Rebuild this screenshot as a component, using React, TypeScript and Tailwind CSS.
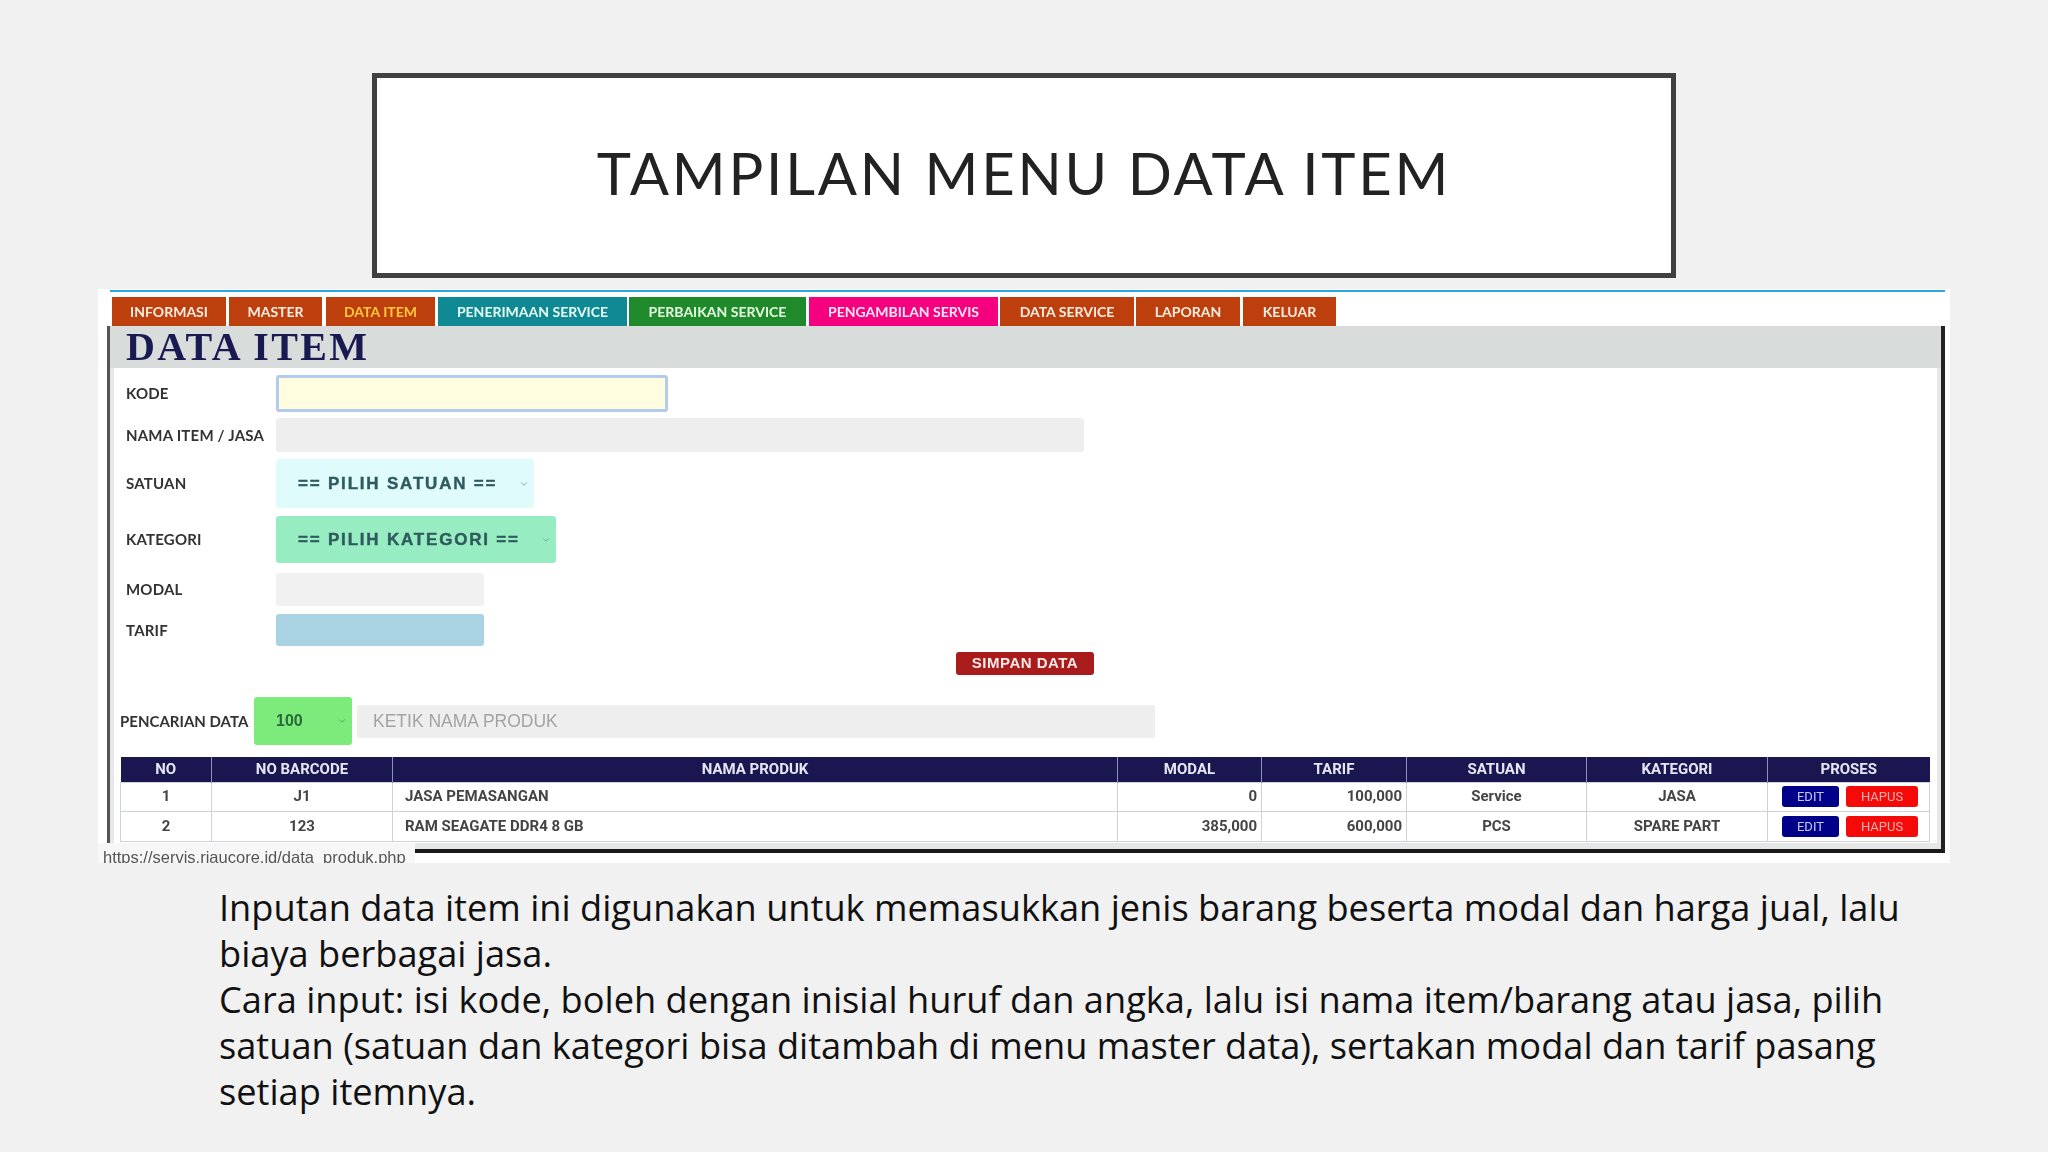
import { ChevronDown } from "lucide-react";

const tabs = [
  { label: "INFORMASI", cls: "w-[114px] bg-[#bd3f0e] text-[#fdeee0] mr-[3px]" },
  { label: "MASTER", cls: "w-[93px] bg-[#bd3f0e] text-[#fdeee0] mr-[4px]" },
  { label: "DATA ITEM", cls: "w-[109px] bg-[#bd3f0e] text-[#ffc93c] mr-[3px]" },
  { label: "PENERIMAAN SERVICE", cls: "w-[189px] bg-[#0f8a94] text-[#e8fbf5] mr-[2px]" },
  { label: "PERBAIKAN SERVICE", cls: "w-[177px] bg-[#1f8a2c] text-[#e8fbe0] mr-[3px]" },
  { label: "PENGAMBILAN SERVIS", cls: "w-[189px] bg-[#f5007f] text-[#ffe8f4] mr-[2px]" },
  { label: "DATA SERVICE", cls: "w-[134px] bg-[#bd3f0e] text-[#fdeee0] mr-[2px]" },
  { label: "LAPORAN", cls: "w-[104px] bg-[#bd3f0e] text-[#fdeee0] mr-[3px]" },
  { label: "KELUAR", cls: "w-[93px] bg-[#bd3f0e] text-[#fdeee0]" },
];

const FormLabel = ({ text }: { text: string }) => (
  <label className="w-[162px] shrink-0 pl-[12px] font-['Lato'] text-[15px] font-bold leading-none tracking-[0.2px] text-[#333]">{text}</label>
);

const Pick = ({ text, cls }: { text: string; cls: string }) => (
  <div className={`flex items-center justify-between rounded-[3px] pl-[22px] pr-[5px] ${cls}`}>
    <span className="font-['Liberation_Sans'] text-[17px] font-bold tracking-[1.8px] text-[#2f5a5e] [-webkit-text-stroke:0.4px_#2f5a5e]">{text}</span>
    <ChevronDown size={10} strokeWidth={2} className="text-[#6f9a9a]" />
  </div>
);

const rows = [
  { no: "1", code: "J1", name: "JASA PEMASANGAN", modal: "0", tarif: "100,000", unit: "Service", cat: "JASA" },
  { no: "2", code: "123", name: "RAM SEAGATE DDR4 8 GB", modal: "385,000", tarif: "600,000", unit: "PCS", cat: "SPARE PART" },
];

const heads = ["NO", "NO BARCODE", "NAMA PRODUK", "MODAL", "TARIF", "SATUAN", "KATEGORI", "PROSES"];

export default function App() {
  return (
    <div className="h-[1152px] w-[2048px] overflow-hidden bg-[#f1f1f1]">
      <div className="ml-[372px] mt-[73px] flex h-[205px] w-[1304px] items-center justify-center border-[5px] border-[#404040] bg-white pb-[6px]">
        <h1 className="font-['Lato'] text-[58px] font-normal leading-none tracking-[2.8px] text-[#222]">TAMPILAN MENU DATA ITEM</h1>
      </div>

      <div className="relative ml-[98px] mt-[11px] h-[574px] w-[1852px] bg-white blur-[0.6px]">
        <div className="ml-[12px] h-[2px] w-[1835px] translate-y-[1px] bg-[#2ba7e0]" />
        <nav className="ml-[14px] mt-[6px] flex h-[29px]">
          {tabs.map((t) => (
            <div key={t.label} className={`flex items-center justify-center font-['Lato'] text-[14px] font-bold ${t.cls}`}>
              {t.label}
            </div>
          ))}
        </nav>

        <div className="ml-[9px] h-[527px] w-[1838px] border-b-[4px] border-l-[3px] border-r-[4px] border-b-[#1a1a1a] border-l-[#555] border-r-[#222] bg-[#e6e8e8]">
          <div className="flex h-[42px] items-center bg-[#d8dcdb] pl-[16px]">
            <h2 className="font-['Liberation_Serif'] text-[40px] font-bold leading-none tracking-[2.4px] text-[#1a1a52]">DATA ITEM</h2>
          </div>

          <div className="ml-[4px] mr-[4px] h-[475px] bg-white pt-[7px]">
            <div className="flex items-center">
              <FormLabel text="KODE" />
              <input className="h-[37px] w-[392px] rounded-[3px] border-[3px] border-[#b3cbec] bg-[#fefde0] outline-none" />
            </div>
            <div className="mt-[6px] flex items-center">
              <FormLabel text="NAMA ITEM / JASA" />
              <input className="h-[34px] w-[808px] rounded-[3px] bg-[#eeeeee] outline-none" />
            </div>
            <div className="mt-[7px] flex items-center">
              <FormLabel text="SATUAN" />
              <Pick text="== PILIH SATUAN ==" cls="h-[49px] w-[258px] bg-[#e0fbfc]" />
            </div>
            <div className="mt-[8px] flex items-center">
              <FormLabel text="KATEGORI" />
              <Pick text="== PILIH KATEGORI ==" cls="h-[47px] w-[280px] bg-[#98ecc2]" />
            </div>
            <div className="mt-[10px] flex items-center">
              <FormLabel text="MODAL" />
              <input className="h-[33px] w-[208px] rounded-[3px] bg-[#f1f1f1] outline-none" />
            </div>
            <div className="mt-[8px] flex items-center">
              <FormLabel text="TARIF" />
              <input className="h-[32px] w-[208px] rounded-[3px] bg-[#a9d3e3] outline-none" />
            </div>
            <div className="mt-[6px] pl-[842px]">
              <button className="flex h-[23px] w-[138px] items-center justify-center rounded-[3px] bg-[#a81c1c] font-['Liberation_Sans'] text-[15px] font-bold tracking-[0.5px] text-[#fbeaea]">
                SIMPAN DATA
              </button>
            </div>

            <div className="mt-[22px] flex items-center pl-[6px]">
              <span className="w-[134px] shrink-0 font-['Lato'] text-[15px] font-bold text-[#333]">PENCARIAN DATA</span>
              <div className="flex h-[48px] w-[98px] items-center justify-between rounded-[3px] bg-[#7ceb7c] pl-[22px] pr-[5px]">
                <span className="font-['Liberation_Sans'] text-[16px] font-bold text-[#2a6a3a]">100</span>
                <ChevronDown size={10} strokeWidth={2} className="text-[#4f9a5f]" />
              </div>
              <input
                placeholder="KETIK NAMA PRODUK"
                className="ml-[5px] h-[33px] w-[798px] rounded-[3px] bg-[#eeeeee] pl-[16px] font-['Liberation_Sans'] text-[17.5px] outline-none placeholder:text-[#a3a3a3]"
              />
            </div>

            <table className="ml-[6px] mt-[12px] w-[1809px] table-fixed border-collapse font-['Roboto'] text-[15px] font-bold leading-none text-[#444]">
              <colgroup>
                <col className="w-[91px]" />
                <col className="w-[181px]" />
                <col className="w-[725px]" />
                <col className="w-[144px]" />
                <col className="w-[145px]" />
                <col className="w-[180px]" />
                <col className="w-[181px]" />
                <col className="w-[162px]" />
              </colgroup>
              <thead>
                <tr className="h-[25px] bg-[#1a1650] text-[#e6e6f5]">
                  {heads.map((h) => (
                    <th key={h} className="border-r border-[#8f8fc0] font-bold last:border-r-0">{h}</th>
                  ))}
                </tr>
              </thead>
              <tbody>
                {rows.map((r) => (
                  <tr key={r.no} className="h-[29.5px]">
                    <td className="border border-[#cfd2d6] text-center">{r.no}</td>
                    <td className="border border-[#cfd2d6] text-center">{r.code}</td>
                    <td className="border border-[#cfd2d6] pl-[12px]">{r.name}</td>
                    <td className="border border-[#cfd2d6] pr-[4px] text-right">{r.modal}</td>
                    <td className="border border-[#cfd2d6] pr-[4px] text-right">{r.tarif}</td>
                    <td className="border border-[#cfd2d6] text-center">{r.unit}</td>
                    <td className="border border-[#cfd2d6] text-center">{r.cat}</td>
                    <td className="border border-[#cfd2d6] pl-[14px]">
                      <div className="flex gap-[7px]">
                        <button className="h-[21px] w-[57px] rounded-[3px] bg-[#000088] text-[13px] font-normal text-[#c8c8f0]">EDIT</button>
                        <button className="h-[21px] w-[72px] rounded-[3px] bg-[#f50a0a] text-[13px] font-normal text-[#ffb0b0]">HAPUS</button>
                      </div>
                    </td>
                  </tr>
                ))}
              </tbody>
            </table>
          </div>
        </div>

        <div className="absolute left-0 top-[554px] h-[20px] w-[317px] overflow-hidden bg-[#f7f7f7] pl-[5px] pt-[4px] font-['Liberation_Sans'] text-[16.5px] leading-[20px] text-[#555]">
          https://servis.riaucore.id/data_produk.php
        </div>
      </div>

      <p className="ml-[219px] mt-[21px] w-[1730px] font-['Open_Sans'] text-[36.2px] leading-[46px] text-[#111]">
        Inputan data item ini digunakan untuk memasukkan jenis barang beserta modal dan harga jual, lalu biaya berbagai jasa.
        <br />
        Cara input: isi kode, boleh dengan inisial huruf dan angka, lalu isi nama item/barang atau jasa, pilih satuan (satuan dan kategori bisa ditambah di menu master data), sertakan modal dan tarif pasang setiap itemnya.
      </p>
    </div>
  );
}
